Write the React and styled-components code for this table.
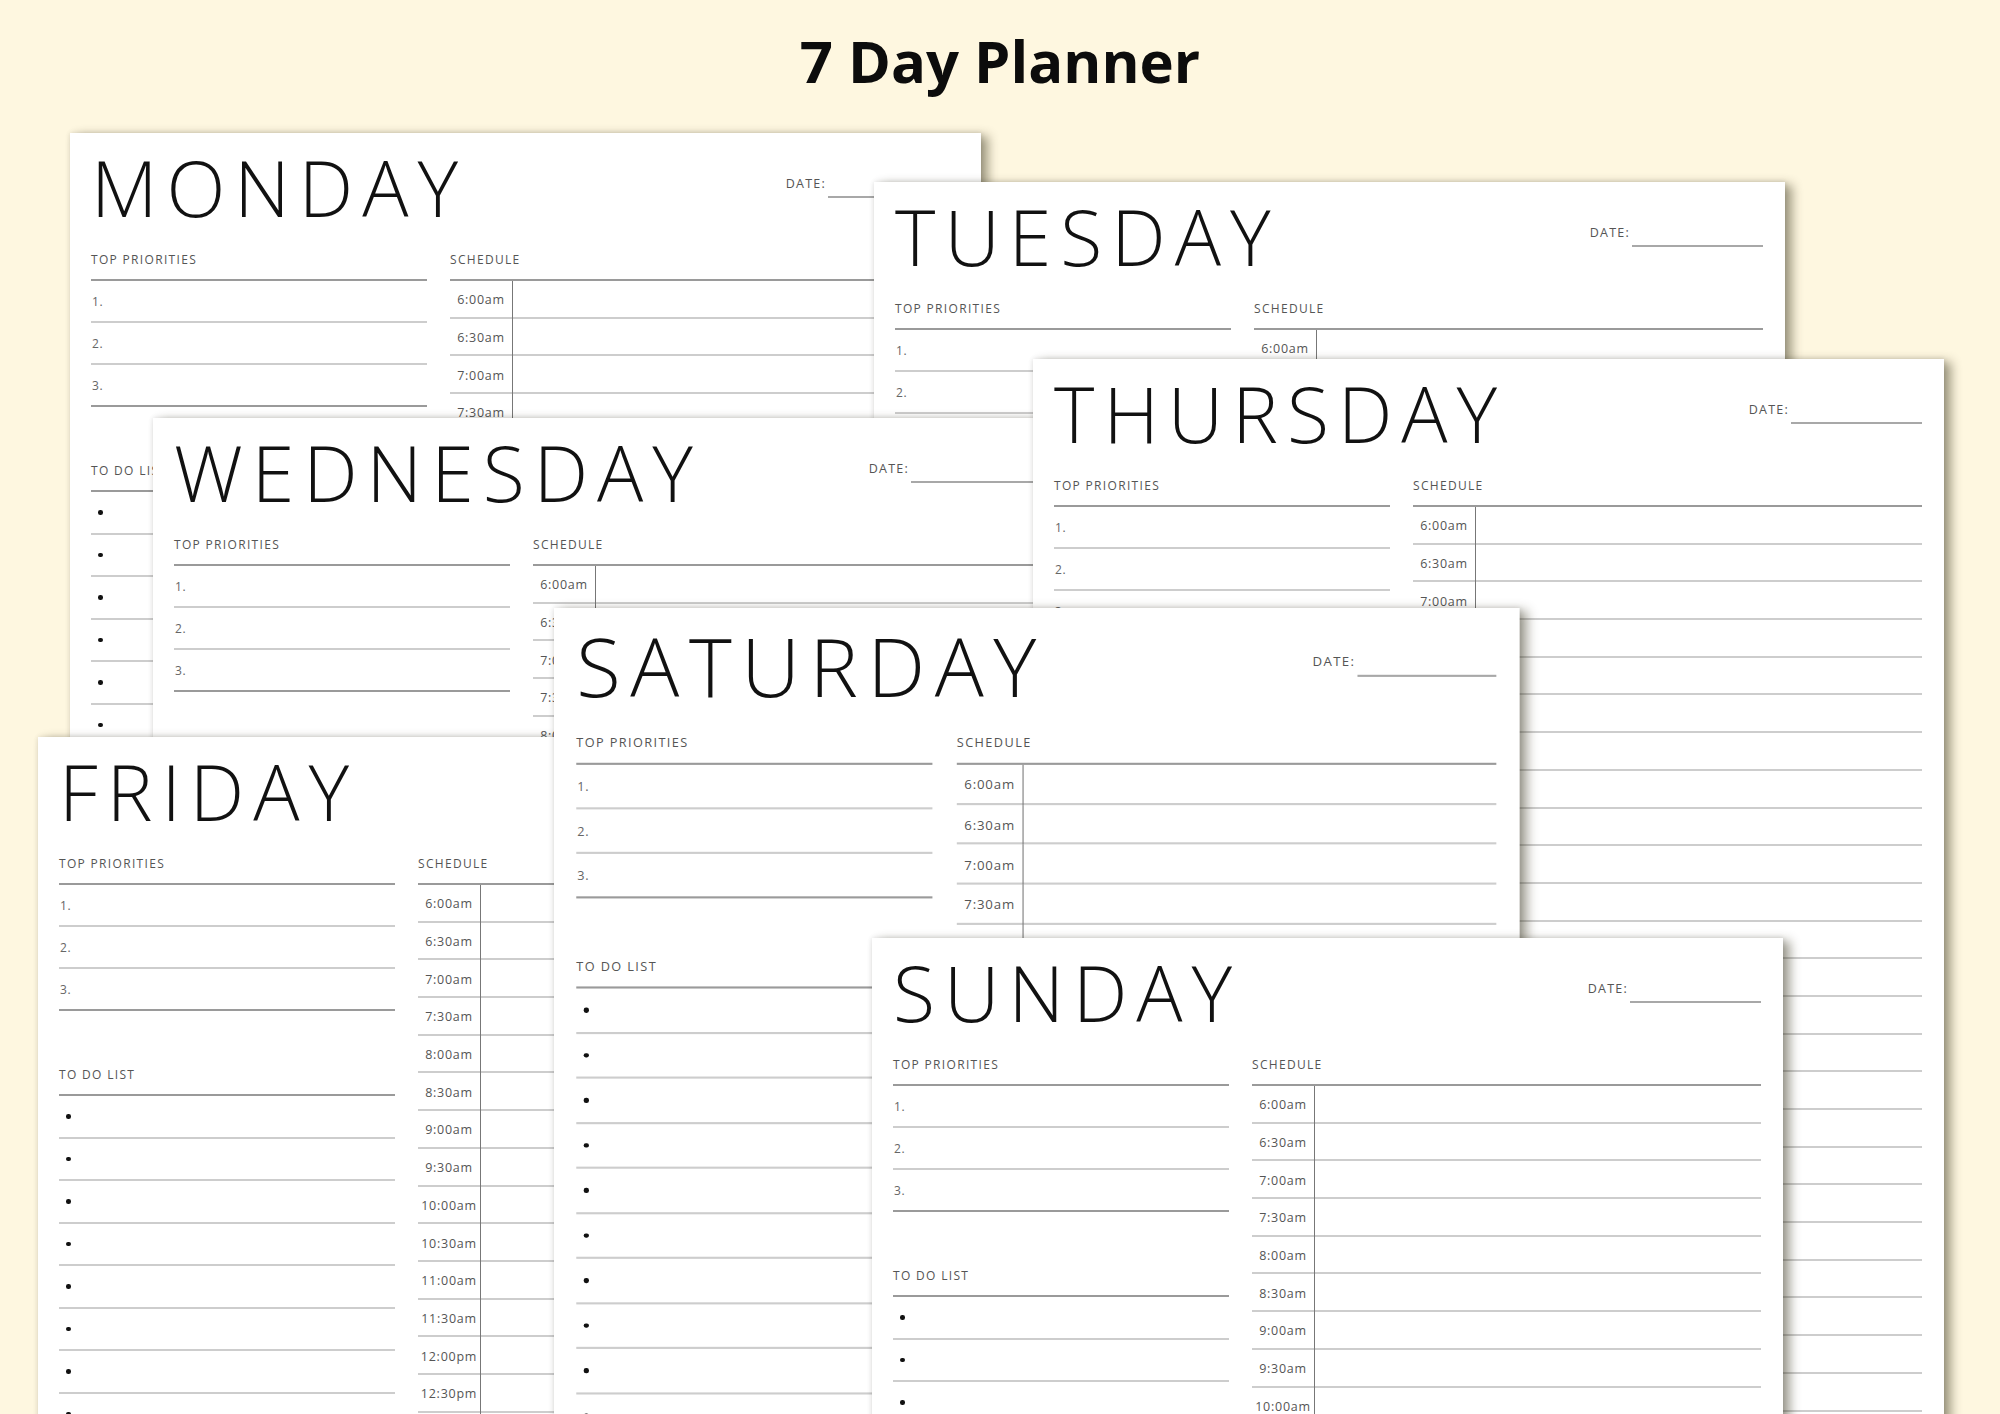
import React from "react";
import styled, { createGlobalStyle } from "styled-components";

const GlobalStyle = createGlobalStyle`
  html, body {
    margin: 0;
    padding: 0;
    background: #fef7e0;
    overflow: hidden;
  }
  * { box-sizing: border-box; }
`;

const Page = styled.div`
  position: relative;
  width: 2000px;
  height: 1414px;
  overflow: hidden;
  background: #fef7e0;
  font-family: "Open Sans", "Liberation Sans", sans-serif;
`;

const Heading = styled.h1`
  margin: 0;
  padding-top: 32px;
  text-align: center;
  font-family: "Open Sans", "Liberation Sans", sans-serif;
  font-weight: 700;
  font-size: 58px;
  line-height: 1;
  color: #0c0c0c;
`;

const Sheet = styled.section`
  position: absolute;
  left: ${(p) => p.$x}px;
  top: ${(p) => p.$y}px;
  width: 911px;
  height: 1400px;
  padding: 16px 22px 0 21px;
  background: #ffffff;
  overflow: hidden;
  transform: scale(${(p) => p.$scale || 1});
  transform-origin: top left;
  box-shadow: 0 0 5px rgba(0, 0, 0, 0.12), 7px 3px 10px rgba(45, 40, 15, 0.45);
`;

const Header = styled.header`
  display: flex;
  justify-content: space-between;
  align-items: flex-start;
  height: 103px;
`;

const DayTitle = styled.h2`
  margin: 0;
  font-family: "Open Sans", "Liberation Sans", sans-serif;
  font-weight: 300;
  font-size: 77px;
  line-height: 77px;
  letter-spacing: 0.117em;
  color: #111;
`;

const DateField = styled.div`
  display: flex;
  align-items: flex-end;
  margin-top: 29px;
`;

const DateLabel = styled.span`
  font-size: 12.5px;
  line-height: 12.5px;
  letter-spacing: 0.1em;
  color: #555;
  padding-bottom: 7px;
`;

const DateLine = styled.span`
  width: 131px;
  height: 2px;
  background: #a8a8a8;
  margin-left: 2px;
`;

const Columns = styled.div`
  display: grid;
  grid-template-columns: 336px 509px;
  column-gap: 23px;
  align-items: start;
`;

const Column = styled.div`
  display: flex;
  flex-direction: column;
`;

const SectionLabel = styled.div`
  margin-top: ${(p) => p.$gap || 0}px;
  font-size: 12px;
  line-height: 16px;
  letter-spacing: 0.11em;
  color: #555;
  padding-bottom: 11px;
  border-bottom: 2px solid #9a9a9a;
`;

const PriorityRow = styled.div`
  height: 42px;
  display: flex;
  align-items: center;
  padding-left: 1px;
  font-size: 12px;
  letter-spacing: 0.05em;
  color: #666;
  border-bottom: 2px solid ${(p) => (p.$last ? "#9a9a9a" : "#cdcdcd")};
`;

const TodoRow = styled.div`
  height: 42.5px;
  display: flex;
  align-items: center;
  padding-left: 7px;
  border-bottom: 2px solid #cdcdcd;
`;

const Bullet = styled.span`
  width: 4.5px;
  height: 4.5px;
  border-radius: 50%;
  background: #111;
`;

const ScheduleRow = styled.div`
  height: 37.7px;
  display: grid;
  grid-template-columns: 63px 1fr;
  border-bottom: 2px solid #cdcdcd;
`;

const TimeCell = styled.div`
  display: flex;
  align-items: center;
  justify-content: center;
  border-right: 1.5px solid #777;
  margin-bottom: -2px;
  font-size: 12.5px;
  letter-spacing: 0.06em;
  color: #555;
`;

const times = [];
for (let h = 6; h <= 21; h++) {
  const hr = h > 12 ? h - 12 : h;
  const suf = h < 12 ? "am" : "pm";
  times.push(`${hr}:00${suf}`);
  times.push(`${hr}:30${suf}`);
}

const days = [
  { name: "MONDAY", x: 70, y: 133 },
  { name: "TUESDAY", x: 874, y: 182 },
  { name: "WEDNESDAY", x: 153, y: 418 },
  { name: "THURSDAY", x: 1033, y: 359 },
  { name: "FRIDAY", x: 38, y: 737 },
  { name: "SATURDAY", x: 554, y: 608, scale: 1.06 },
  { name: "SUNDAY", x: 872, y: 938 },
];

function DaySheet({ day }) {
  return (
    <Sheet $x={day.x} $y={day.y} $scale={day.scale}>
      <Header>
        <DayTitle>{day.name}</DayTitle>
        <DateField>
          <DateLabel>DATE:</DateLabel>
          <DateLine />
        </DateField>
      </Header>
      <Columns>
        <Column>
          <SectionLabel>TOP PRIORITIES</SectionLabel>
          {[1, 2, 3].map((n) => (
            <PriorityRow key={n} $last={n === 3}>
              {n}.
            </PriorityRow>
          ))}
          <SectionLabel $gap={56}>TO DO LIST</SectionLabel>
          {Array.from({ length: 20 }).map((_, i) => (
            <TodoRow key={i}>
              <Bullet />
            </TodoRow>
          ))}
        </Column>
        <Column>
          <SectionLabel>SCHEDULE</SectionLabel>
          {times.map((t) => (
            <ScheduleRow key={t}>
              <TimeCell>{t}</TimeCell>
              <div />
            </ScheduleRow>
          ))}
        </Column>
      </Columns>
    </Sheet>
  );
}

export default function App() {
  return (
    <Page>
      <GlobalStyle />
      <Heading>7 Day Planner</Heading>
      {days.map((d) => (
        <DaySheet key={d.name} day={d} />
      ))}
    </Page>
  );
}
